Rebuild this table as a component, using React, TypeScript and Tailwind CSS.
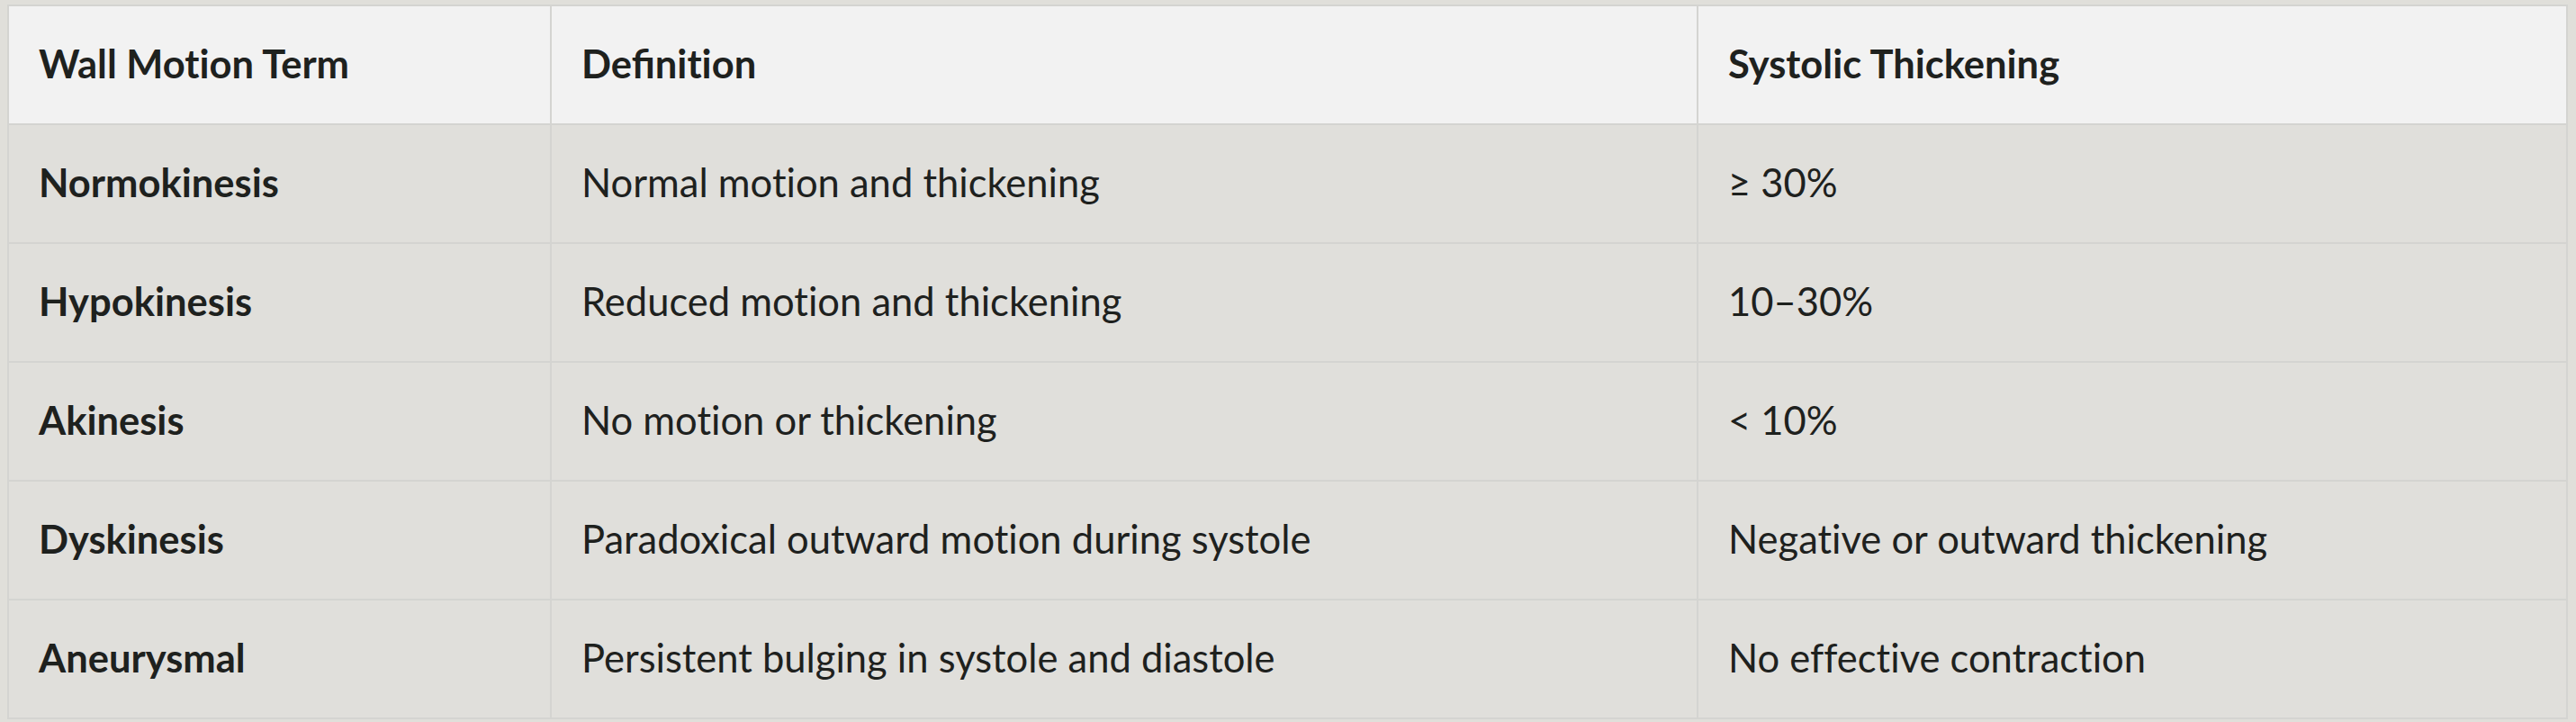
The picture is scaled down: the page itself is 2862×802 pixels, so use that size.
import React from 'react';

interface WallMotionRow {
  term: string;
  definition: string;
  thickening: string;
}

const ROWS: WallMotionRow[] = [
  { term: 'Normokinesis', definition: 'Normal motion and thickening', thickening: '≥ 30%' },
  { term: 'Hypokinesis', definition: 'Reduced motion and thickening', thickening: '10–30%' },
  { term: 'Akinesis', definition: 'No motion or thickening', thickening: '< 10%' },
  { term: 'Dyskinesis', definition: 'Paradoxical outward motion during systole', thickening: 'Negative or outward thickening' },
  { term: 'Aneurysmal', definition: 'Persistent bulging in systole and diastole', thickening: 'No effective contraction' },
];

// keep the fi ligature in the header but not Lato's "ti"
const splitTi = (s: string) => s.replace(/ti/g, 't\u200Ci');

const cell = 'border-2 border-[#d4d4d1] px-[33px] pt-[30px] pb-[34px] text-left align-middle leading-[66px]';

const App: React.FC = () => {
  return (
    <div
      className="min-h-screen bg-[#e0dfda] pt-[5px] pl-[8px] pr-[9px] pb-[5px] text-[#1e211e]"
      style={{ fontFamily: 'Lato, "Liberation Sans", sans-serif' }}
    >
      <table className="w-full border-collapse text-[43.5px]">
        <colgroup>
          <col className="w-[603px]" />
          <col className="w-[1274px]" />
          <col />
        </colgroup>
        <thead>
          <tr className="bg-[#f2f2f2]">
            <th className={`${cell} font-bold`}>{splitTi('Wall Motion Term')}</th>
            <th className={`${cell} font-bold`}>{splitTi('Definition')}</th>
            <th className={`${cell} font-bold`}>Systolic Thickening</th>
          </tr>
        </thead>
        <tbody className="[font-variant-ligatures:none]">
          {ROWS.map((row) => (
            <tr key={row.term} className="bg-[#e0dfdb]">
              <td className={`${cell} font-bold`}>{row.term}</td>
              <td className={cell}>{row.definition}</td>
              <td className={cell}>{row.thickening}</td>
            </tr>
          ))}
        </tbody>
      </table>
    </div>
  );
};

export default App;
